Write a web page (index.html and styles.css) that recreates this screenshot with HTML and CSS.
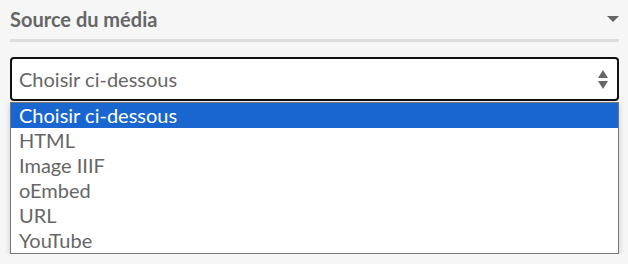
FILE: index.html
```html
<!DOCTYPE html>
<html lang="fr">
<head>
    <meta charset="UTF-8">
    <meta name="viewport" content="width=device-width, initial-scale=1.0">
    <title>Source du média</title>
    <link rel="stylesheet" href="styles.css">
</head>
<body>
    <div class="panneau">
        <div class="entete">
            <span class="titre">Source du média</span>
            <span class="fleche"></span>
        </div>

        <div class="champ">
            <div class="selecteur">
                <span>Choisir ci-dessous</span>
                <span class="fleches">
                    <span class="haut"></span>
                    <span class="bas"></span>
                </span>
            </div>
            <ul class="options">
                <li class="choisi">Choisir ci-dessous</li>
                <li>HTML</li>
                <li>Image IIIF</li>
                <li>oEmbed</li>
                <li>URL</li>
                <li>YouTube</li>
            </ul>
        </div>
    </div>
</body>
</html>
```

FILE: styles.css
```css
body {
    margin: 0;
    background-color: #f6f6f6;
    font-family: Lato, "Noto Sans", sans-serif;
    color: #666;
}

.panneau {
    padding: 0 9px 0 10px;
}

.entete {
    display: flex;
    justify-content: space-between;
    align-items: center;
    padding: 7px 0 8px;
    border-bottom: 3px solid #dddddd;
}

.titre {
    font-size: 20px;
    font-weight: bold;
    line-height: 24px;
    color: #666;
}

.fleche {
    width: 0;
    height: 0;
    border-left: 6px solid transparent;
    border-right: 6px solid transparent;
    border-top: 6px solid #666;
}

.champ {
    margin-top: 15px;
}

.selecteur {
    display: flex;
    justify-content: space-between;
    align-items: center;
    height: 40px;
    padding: 0 9px 0 7px;
    border: 2px solid #111;
    border-radius: 4px;
    background-color: #fff;
    font-size: 20px;
    line-height: 24px;
}

.fleches {
    display: flex;
    flex-direction: column;
    gap: 3px;
}

.haut, .bas {
    width: 0;
    height: 0;
    border-left: 5px solid transparent;
    border-right: 5px solid transparent;
}

.haut {
    border-bottom: 8px solid #666;
}

.bas {
    border-top: 8px solid #666;
}

.options {
    list-style: none;
    margin: 1px 0 0;
    padding: 0;
    border: 1px solid #777;
    background-color: #fff;
    box-shadow: 0 2px 6px rgba(0, 0, 0, 0.18);
}

.options li {
    height: 25px;
    padding-left: 8px;
    font-size: 20px;
    line-height: 25px;
}

.options .choisi {
    background-color: #1a66d0;
    color: #fff;
}
```
